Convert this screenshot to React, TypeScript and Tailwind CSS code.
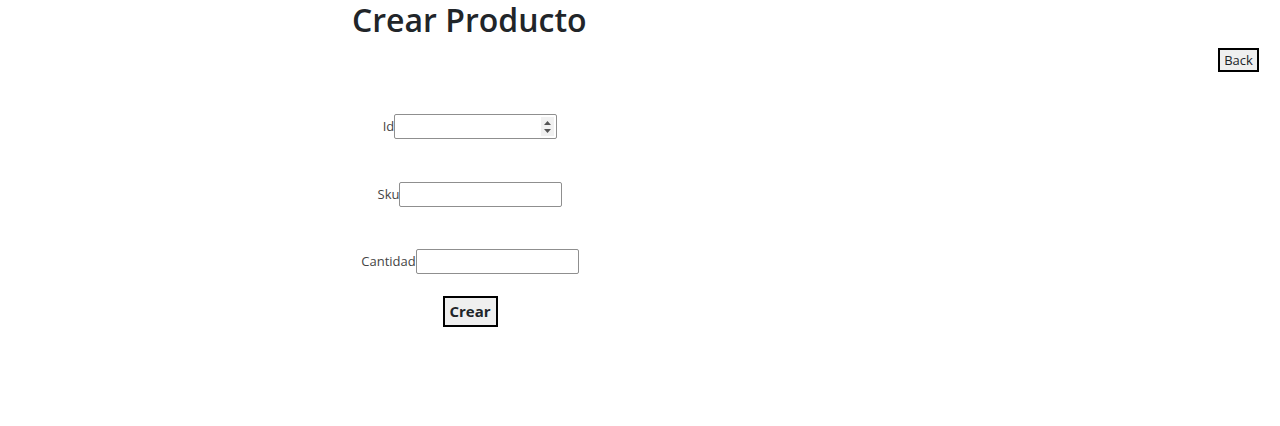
export default function App() {
  return (
    <div className="min-h-[426px] bg-white text-[#212529]" style={{ fontFamily: "'Open Sans', 'Noto Sans', sans-serif" }}>
      <div className="pl-[352px] pt-[1px]">
        <h1 className="text-[32px] font-semibold leading-[38px] whitespace-nowrap">Crear Producto</h1>
      </div>

      <div className="mt-[9px] flex justify-end pr-[21px]">
        <button className="h-[24px] w-[41px] border-2 border-black bg-[#efefef] text-[13px] leading-none text-[#212529]">
          Back
        </button>
      </div>

      <form className="ml-[352px] mt-[42px] flex w-[236px] flex-col items-center text-[13px] text-[#444]">
        <div className="flex items-center justify-center">
          <label>Id</label>
          <div className="relative">
            <input type="number" className="h-[25px] w-[163px] rounded-[2px] border border-[#8f8f8f] bg-white px-[2px]" />
            {/* spin buttons, drawn since headless Chrome hides them */}
            <span className="pointer-events-none absolute right-[3px] top-[3px] flex h-[19px] w-[13px] flex-col items-center justify-center gap-[4px] bg-[#f1f1f1]">
              <svg width="7" height="4" viewBox="0 0 7 4"><path d="M0 4 L3.5 0 L7 4 Z" fill="#555" /></svg>
              <svg width="7" height="4" viewBox="0 0 7 4"><path d="M0 0 L3.5 4 L7 0 Z" fill="#555" /></svg>
            </span>
          </div>
        </div>
        <div className="mt-[43px] flex items-center justify-center">
          <label>Sku</label>
          <input type="text" className="h-[25px] w-[163px] rounded-[2px] border border-[#8f8f8f] bg-white px-[2px]" />
        </div>
        <div className="mt-[42px] flex items-center justify-center">
          <label>Cantidad</label>
          <input type="text" className="h-[25px] w-[163px] rounded-[2px] border border-[#8f8f8f] bg-white px-[2px]" />
        </div>
        <button type="button" className="mt-[22px] h-[31px] w-[55px] border-2 border-black bg-[#efefef] text-[15px] font-bold leading-none text-[#212529]">
          Crear
        </button>
      </form>
    </div>
  );
}
